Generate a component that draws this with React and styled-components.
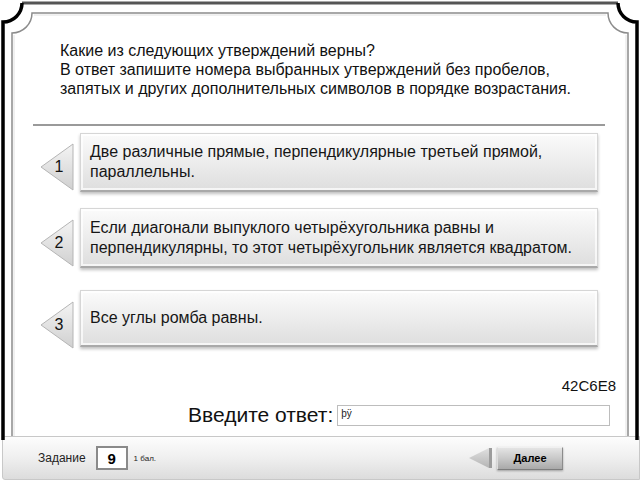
import React from 'react';
import styled, { createGlobalStyle } from 'styled-components';

const GlobalStyle = createGlobalStyle`
  html, body {
    margin: 0;
    padding: 0;
    background: #fff;
  }
  body {
    font-family: "Liberation Sans", Arial, sans-serif;
    color: #111;
  }
`;

const Screen = styled.div`
  position: relative;
  width: 640px;
  height: 480px;
  overflow: hidden;
  background: #fff;
  display: flex;
  flex-direction: column;
`;

const FrameArt = styled.svg`
  position: absolute;
  left: 0;
  top: 0;
  pointer-events: none;
`;

const Main = styled.div`
  position: relative;
  height: 436px;
  display: flex;
  flex-direction: column;
  padding-top: 41px;
  box-sizing: border-box;
`;

const Question = styled.div`
  margin-left: 60px;
  font-size: 16px;
  line-height: 19px;
`;

const Separator = styled.div`
  margin: 26px 0 0 33px;
  width: 572px;
  height: 2px;
  background: #9a9a9a;
`;

const Options = styled.div`
  display: flex;
  flex-direction: column;
  margin-top: 7px;
`;

const OptionRow = styled.div`
  display: flex;
  align-items: flex-start;
  margin-top: ${(p) => p.$gap}px;
`;

const Marker = styled.div`
  position: relative;
  width: 36px;
  height: 48px;
  margin-left: 40px;
  margin-top: ${(p) => p.$offset}px;
  flex-shrink: 0;
`;

const MarkerNum = styled.span`
  position: absolute;
  left: 12px;
  top: 0;
  width: 14px;
  height: 48px;
  display: flex;
  align-items: center;
  justify-content: center;
  font-size: 16px;
  color: #111;
`;

const Card = styled.div`
  margin-left: 4px;
  width: 518px;
  height: ${(p) => p.$h}px;
  box-sizing: border-box;
  padding: 0 8px 0 9px;
  display: flex;
  align-items: center;
  font-size: 16px;
  line-height: 20px;
  color: #161616;
  background: linear-gradient(#fbfbfb 0%, #eeeeee 45%, #dedede 100%);
  border: 1px solid #d6d6d6;
  border-bottom: 2px solid #a9a9a9;
  box-shadow: 0 2px 3px rgba(0, 0, 0, 0.25), inset 0 0 0 2px rgba(255, 255, 255, 0.7);
`;

const Code = styled.div`
  margin-top: 28px;
  align-self: flex-end;
  margin-right: 24px;
  font-size: 15px;
`;

const AnswerRow = styled.div`
  display: flex;
  align-items: center;
  margin-top: 9px;
  margin-left: 188px;
`;

const AnswerLabel = styled.span`
  font-size: 21px;
  color: #111;
`;

const AnswerInput = styled.div`
  margin-left: 4px;
  width: 273px;
  height: 21px;
  box-sizing: border-box;
  border: 1px solid #bdbdbd;
  background: #fff;
  font-size: 10px;
  padding: 2px 3px;
  color: #222;
`;

const BottomBar = styled.div`
  height: 44px;
  margin-left: 2px;
  box-sizing: border-box;
  border: 1px solid #c8c8c8;
  border-radius: 3px 0 0 3px;
  background: linear-gradient(#fdfdfd 0%, #efefef 50%, #dcdcdc 100%);
  display: flex;
  align-items: center;
  padding-left: 35px;
`;

const TaskLabel = styled.span`
  font-size: 12px;
  color: #222;
`;

const TaskBox = styled.div`
  margin-left: 10px;
  width: 32px;
  height: 24px;
  box-sizing: border-box;
  border: 2px solid #8a8a8a;
  background: #fff;
  display: flex;
  align-items: center;
  justify-content: center;
  font-weight: bold;
  font-size: 15px;
  color: #000;
`;

const Score = styled.span`
  margin-left: 6px;
  font-size: 8px;
  color: #222;
`;

const Spacer = styled.div`
  flex: 1;
`;

const BackButton = styled.svg`
  display: block;
`;

const NextButton = styled.div`
  margin-left: 3px;
  margin-right: 76px;
  width: 66px;
  height: 23px;
  box-sizing: border-box;
  display: flex;
  align-items: center;
  justify-content: center;
  font-weight: bold;
  font-size: 11px;
  color: #000;
  background: linear-gradient(#e4e4e4 0%, #c8c8c8 50%, #a9a9a9 100%);
  border-top: 1px solid #f0f0f0;
  border-left: 1px solid #ddd;
  border-right: 1px solid #8c8c8c;
  border-bottom: 1px solid #7d7d7d;
  box-shadow: 0 1px 2px rgba(0, 0, 0, 0.3);
`;

const options = [
  {
    n: 1,
    text: 'Две различные прямые, перпендикулярные третьей прямой, параллельны.',
    gap: 0,
    h: 59,
    offset: 10,
  },
  {
    n: 2,
    text: 'Если диагонали выпуклого четырёхугольника равны и перпендикулярны, то этот четырёхугольник является квадратом.',
    gap: 16,
    h: 60,
    offset: 11,
  },
  {
    n: 3,
    text: 'Все углы ромба равны.',
    gap: 22,
    h: 57,
    offset: 11,
  },
];

const Frame = () => (
  <FrameArt width="640" height="440" viewBox="0 0 640 440">
    <path d="M22 3 H618" stroke="#555" strokeWidth="3" fill="none" />
    <path d="M3 440 V22 A19 19 0 0 0 22 3" stroke="#000" strokeWidth="3.5" fill="none" />
    <path d="M618 3 A19 19 0 0 0 637 22 V440" stroke="#000" strokeWidth="3.5" fill="none" />
    <path
      d="M12 436 V33 A20 20 0 0 0 32 13 H608 A20 20 0 0 0 628 33 V436"
      stroke="#8c8c8c"
      strokeWidth="1.5"
      fill="none"
    />
    <path
      d="M14 436 V35 M34 15 H606 M626 35 V436"
      stroke="#e2e2e2"
      strokeWidth="1"
      fill="none"
    />
  </FrameArt>
);

const Triangle = ({ n, offset }) => (
  <Marker $offset={offset}>
    <svg width="36" height="48" viewBox="0 0 36 48">
      <defs>
        <linearGradient id={`tri${n}`} x1="0" y1="0" x2="0" y2="1">
          <stop offset="0" stopColor="#f4f4f4" />
          <stop offset="1" stopColor="#d0d0d0" />
        </linearGradient>
      </defs>
      <polygon points="1,24 33,1 33,47" fill={`url(#tri${n})`} stroke="#b5b5b5" strokeWidth="1" />
    </svg>
    <MarkerNum>{n}</MarkerNum>
  </Marker>
);

export default function App() {
  return (
    <>
      <GlobalStyle />
      <Screen>
        <Frame />
        <Main>
          <Question>
            Какие из следующих утверждений верны?
            <br />
            В ответ запишите номера выбранных утверждений без пробелов,
            <br />
            запятых и других дополнительных символов в порядке возрастания.
          </Question>
          <Separator />
          <Options>
            {options.map((o) => (
              <OptionRow key={o.n} $gap={o.gap}>
                <Triangle n={o.n} offset={o.offset} />
                <Card $h={o.h}>{o.text}</Card>
              </OptionRow>
            ))}
          </Options>
          <Code>42C6E8</Code>
          <AnswerRow>
            <AnswerLabel>Введите ответ:</AnswerLabel>
            <AnswerInput>þÿ</AnswerInput>
          </AnswerRow>
        </Main>
        <BottomBar>
          <TaskLabel>Задание</TaskLabel>
          <TaskBox>9</TaskBox>
          <Score>1 бал.</Score>
          <Spacer />
          <BackButton width="26" height="24" viewBox="0 0 26 24">
            <defs>
              <linearGradient id="back" x1="0" y1="0" x2="0" y2="1">
                <stop offset="0" stopColor="#e0e0e0" />
                <stop offset="1" stopColor="#b4b4b4" />
              </linearGradient>
            </defs>
            <polygon points="1,12 21,2 21,22" fill="url(#back)" />
            <rect x="21" y="2" width="3" height="20" fill="#9c9c9c" />
          </BackButton>
          <NextButton>Далее</NextButton>
        </BottomBar>
      </Screen>
    </>
  );
}
